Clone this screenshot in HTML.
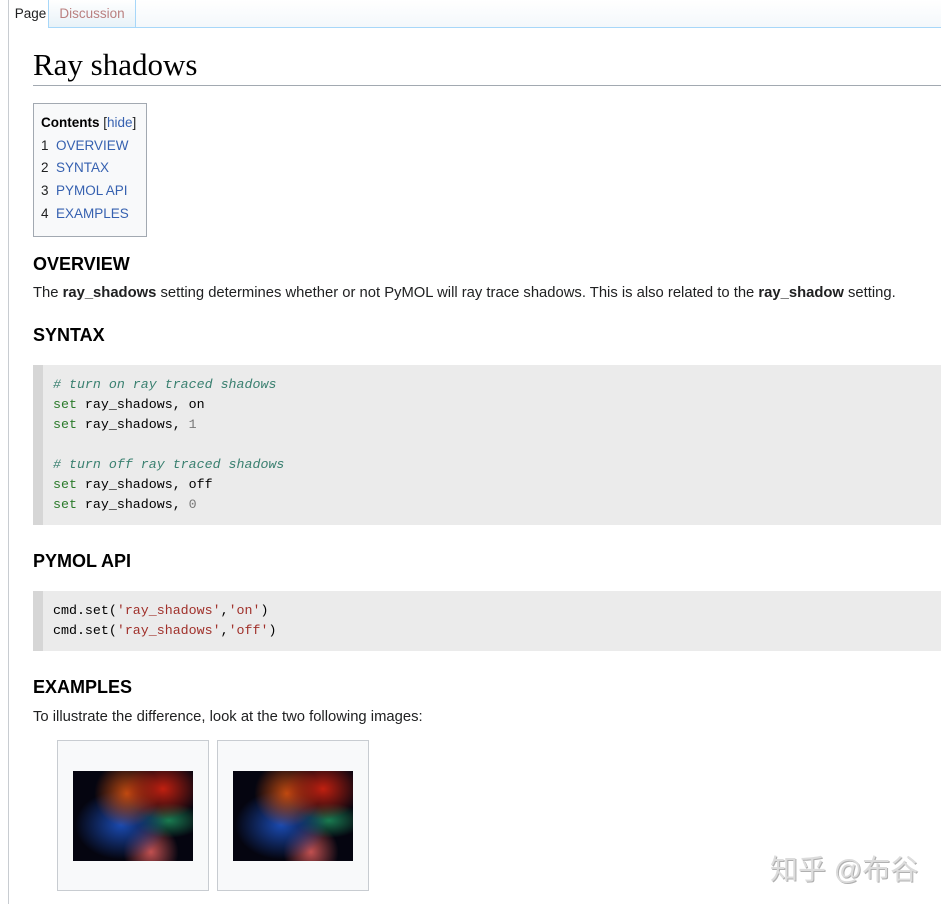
<!DOCTYPE html>
<html><head><meta charset="utf-8"><style>
body{margin:0;width:941px;height:904px;background:#fff;position:relative;overflow:hidden;font-family:"Liberation Sans","Noto Sans CJK SC",sans-serif;color:#202122}
.a{position:absolute;white-space:nowrap}
.h{font-weight:bold;font-size:18px;color:#000}
.t{font-size:14.8px}
pre{margin:0;font-family:"Liberation Mono","Noto Sans CJK SC",monospace;font-size:13.3px;line-height:20px;color:#000}
.g{color:#2a7a2a}.c{color:#3a8070;font-style:italic}.n{color:#777}.r{color:#a0302a}
a{color:#3661b0;text-decoration:none}
</style></head><body>
<div class="a" style="left:8px;top:0;width:1px;height:904px;background:#c8ccd1"></div>
<div class="a" style="left:9px;top:27px;width:932px;height:1px;background:#a7d7f9"></div>
<div class="a" style="left:136px;top:0;width:805px;height:27px;background:linear-gradient(#fff,#f4f8fb)"></div>
<div class="a" style="left:9px;top:0;width:39px;height:28px;background:#fff;font-size:13.5px;line-height:27px;text-align:center;padding-left:4px;box-sizing:border-box">Page</div>
<div class="a" style="left:48px;top:0;width:88px;height:27px;background:linear-gradient(#fff,#e8f2f8);border-left:1px solid #a7d7f9;border-right:1px solid #a7d7f9;box-sizing:border-box;font-size:13.5px;line-height:27px;text-align:center;color:#ba8080">Discussion</div>
<div class="a" style="left:33px;top:47px;font-family:'Liberation Serif',serif;font-size:31px;color:#000">Ray shadows</div>
<div class="a" style="left:33px;top:85px;width:908px;height:1px;background:#a2a9b1"></div>
<div class="a" style="left:33px;top:103px;width:114px;height:134px;box-sizing:border-box;border:1px solid #a2a9b1;background:#f8f9fa;font-size:13.5px;line-height:22.7px;padding:8px 0 0 7px">
<div><b style="color:#000">Contents</b> [<a>hide</a>]</div>
<div>1&nbsp; <a>OVERVIEW</a></div><div>2&nbsp; <a>SYNTAX</a></div><div>3&nbsp; <a>PYMOL API</a></div><div>4&nbsp; <a>EXAMPLES</a></div>
</div>
<div class="a h" style="left:33px;top:254px">OVERVIEW</div>
<div class="a t" style="left:33px;top:285px">The <b>ray_shadows</b> setting determines whether or not PyMOL will ray trace shadows. This is also related to the <b>ray_shadow</b> setting.</div>
<div class="a h" style="left:33px;top:325px">SYNTAX</div>
<div class="a" style="left:33px;top:365px;width:908px;height:160px;background:#ebebeb;border-left:10px solid #d6d6d6;box-sizing:border-box;padding:10px 0 0 10px">
<pre><span class="c"># turn on ray traced shadows</span>
<span class="g">set</span> ray_shadows, on
<span class="g">set</span> ray_shadows, <span class="n">1</span>

<span class="c"># turn off ray traced shadows</span>
<span class="g">set</span> ray_shadows, off
<span class="g">set</span> ray_shadows, <span class="n">0</span></pre></div>
<div class="a h" style="left:33px;top:551px">PYMOL API</div>
<div class="a" style="left:33px;top:591px;width:908px;height:60px;background:#ebebeb;border-left:10px solid #d6d6d6;box-sizing:border-box;padding:10px 0 0 10px">
<pre>cmd.set(<span class="r">'ray_shadows'</span>,<span class="r">'on'</span>)
cmd.set(<span class="r">'ray_shadows'</span>,<span class="r">'off'</span>)</pre></div>
<div class="a h" style="left:33px;top:677px">EXAMPLES</div>
<div class="a t" style="left:33px;top:709px">To illustrate the difference, look at the two following images:</div>
<div class="a" style="left:57px;top:740px;width:152px;height:151px;box-sizing:border-box;border:1px solid #c8ccd1;background:#f8f9fa"></div>
<div class="a" style="left:217px;top:740px;width:152px;height:151px;box-sizing:border-box;border:1px solid #c8ccd1;background:#f8f9fa"></div>
<div class="a" style="left:73px;top:771px;width:120px;height:90px;background:radial-gradient(ellipse at 75% 20%,#c02010 0,transparent 30%),radial-gradient(ellipse at 45% 25%,#c04a10 0,transparent 35%),radial-gradient(ellipse at 40% 60%,#1a4ab0 0,transparent 45%),radial-gradient(ellipse at 80% 55%,#1a7a50 0,transparent 25%),radial-gradient(ellipse at 65% 90%,#c05050 0,transparent 25%),#050510"></div>
<div class="a" style="left:233px;top:771px;width:120px;height:90px;background:radial-gradient(ellipse at 75% 20%,#c02010 0,transparent 30%),radial-gradient(ellipse at 45% 25%,#c04a10 0,transparent 35%),radial-gradient(ellipse at 40% 60%,#1a4ab0 0,transparent 45%),radial-gradient(ellipse at 80% 55%,#1a7a50 0,transparent 25%),radial-gradient(ellipse at 65% 90%,#c05050 0,transparent 25%),#050510"></div>
<div class="a" style="left:770px;top:848px;font-size:28px;color:#dcdcdc;text-shadow:1px 1px 0 #b0b0b0">知乎 @布谷</div>
</body></html>
